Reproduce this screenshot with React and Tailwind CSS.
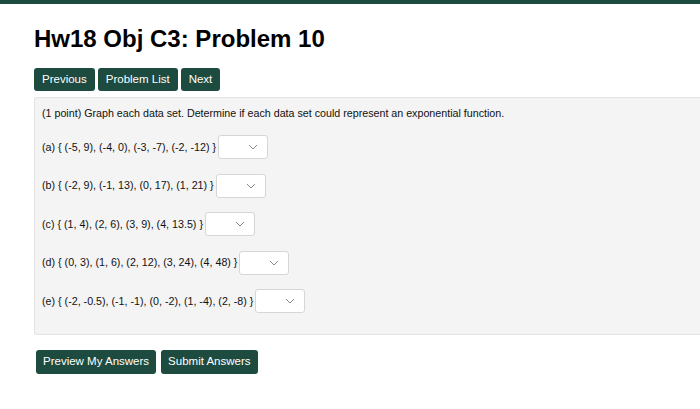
import React from 'react';

const rows = [
  '(a) { (-5, 9), (-4, 0), (-3, -7), (-2, -12) }',
  '(b) { (-2, 9), (-1, 13), (0, 17), (1, 21) }',
  '(c) { (1, 4), (2, 6), (3, 9), (4, 13.5) }',
  '(d) { (0, 3), (1, 6), (2, 12), (3, 24), (4, 48) }',
  '(e) { (-2, -0.5), (-1, -1), (0, -2), (1, -4), (2, -8) }',
];

function Chevron() {
  return (
    <svg width="10" height="6" viewBox="0 0 10 6" fill="none" stroke="#8a8a8a" strokeWidth="1">
      <path d="M1 1 L5 5 L9 1" />
    </svg>
  );
}

export default function App() {
  return (
    <div className="min-h-[409px] bg-white font-['Liberation_Sans',Arial,sans-serif] text-[#111]">
      <div className="h-[4px] bg-[#1d4b3f]" />
      <div className="pl-[34px]">
        <h1 className="pt-[20px] text-[24px] font-bold leading-[30px] text-black">Hw18 Obj C3: Problem 10</h1>
        <div className="mt-[14px] flex gap-[3px]">
          <button className="h-[23px] rounded-[3px] bg-[#1d4b3f] px-[8px] text-[11.5px] text-white">Previous</button>
          <button className="h-[23px] rounded-[3px] bg-[#1d4b3f] px-[8px] text-[11.5px] text-white">Problem List</button>
          <button className="h-[23px] rounded-[3px] bg-[#1d4b3f] px-[8px] text-[11.5px] text-white">Next</button>
        </div>
        <div className="mt-[6px] h-[238px] rounded-l-[3px] border border-r-0 border-[#e3e3e3] bg-[#f4f4f4] pl-[7px] pt-[8px] text-[10.7px]">
          <p className="leading-[14px]">(1 point) Graph each data set. Determine if each data set could represent an exponential function.</p>
          <div className="mt-[15px] flex flex-col gap-[14.5px]">
            {rows.map((r) => (
              <div key={r} className="flex items-center gap-[2px]">
                <span>{r}</span>
                <div className="flex h-[24px] w-[50px] items-center justify-end rounded-[3px] border border-[#d6d6d6] bg-white pr-[9px]">
                  <Chevron />
                </div>
              </div>
            ))}
          </div>
        </div>
        <div className="mt-[15px] flex gap-[5px] pl-[2px]">
          <button className="h-[24px] rounded-[3px] bg-[#1d4b3f] px-[7px] text-[11.5px] text-white">Preview My Answers</button>
          <button className="h-[24px] rounded-[3px] bg-[#1d4b3f] px-[7px] text-[11.5px] text-white">Submit Answers</button>
        </div>
      </div>
    </div>
  );
}
